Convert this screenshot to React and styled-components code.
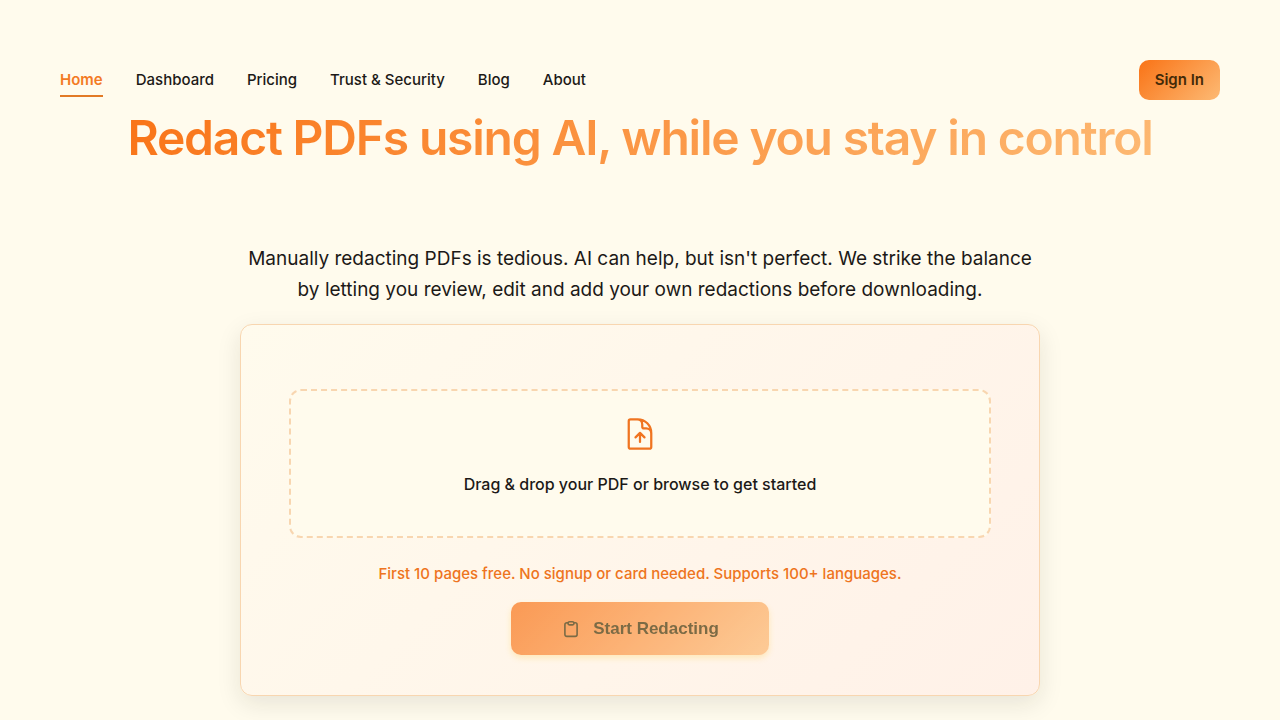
import React from "react";
import styled, { createGlobalStyle } from "styled-components";

const GlobalStyle = createGlobalStyle`
    * {
        box-sizing: border-box;
    }
    body {
        margin: 0;
        background-color: #fffbed;
        color: #1c1917;
        font-family: Inter, sans-serif;
    }
`
const Head = styled.header`
    display: flex;
    align-items: center;
    justify-content: space-between;
    padding: 60px 60px 0;
`
const HeadNav = styled.nav`
    display: flex;
    gap: 33px;
`
const NavLink = styled.a`
    padding: 5px 0 3px;
    border-bottom: 2px solid ${({ $active }) => ($active ? "#e27a26" : "transparent")};
    color: ${({ $active }) => ($active ? "#f37a24" : "#1c1917")};
    font-size: 15px;
    font-weight: ${({ $active }) => ($active ? 600 : 500)};
    line-height: 24px;
    text-decoration: none;
`
const SignIn = styled.button`
    height: 40px;
    padding: 0 16px;
    border: none;
    border-radius: 10px;
    background: linear-gradient(135deg, #f97316, #fdba74);
    color: #442a08;
    font-family: inherit;
    font-size: 15px;
    font-weight: 600;
    line-height: 24px;
    cursor: pointer;
`
const Main = styled.main`
    display: flex;
    flex-direction: column;
    align-items: center;
    padding-bottom: 24px;
`
const Title = styled.h1`
    margin: 0;
    padding: 8px 0;
    background: linear-gradient(135deg, #f97316, #fdba74);
    background-clip: text;
    color: transparent;
    font-size: 48px;
    font-weight: 600;
    line-height: 60px;
    letter-spacing: -0.025em;
    text-align: center;
`
const Intro = styled.p`
    max-width: 800px;
    margin: 67px 0 19px;
    font-size: 19px;
    line-height: 31px;
    text-align: center;
`
const Card = styled.section`
    display: flex;
    flex-direction: column;
    align-items: center;
    width: 100%;
    max-width: 800px;
    padding: 64px 48px 40px;
    border: 1px solid #f8d6b0;
    border-radius: 12px;
    background: linear-gradient(135deg, #fffbed, #fff1e8);
    box-shadow: 0 8px 24px rgba(28, 25, 23, 0.1);
`
const DropZone = styled.label`
    display: flex;
    flex-direction: column;
    align-items: center;
    gap: 20px;
    width: 100%;
    padding: 25px 24px 40px;
    border: 2px dashed #f8d6b0;
    border-radius: 12px;
    background-color: #fffbed;
    font-size: 16px;
    font-weight: 500;
    line-height: 24px;
    cursor: pointer;
`
const FileInput = styled.input`
    display: none;
`
const Note = styled.p`
    margin: 24px 0 16px;
    color: #ee7420;
    font-size: 15px;
    font-weight: 500;
    line-height: 24px;
`
const StartButton = styled.button`
    display: flex;
    align-items: center;
    justify-content: center;
    gap: 12px;
    min-width: 258px;
    height: 53px;
    padding: 0 32px;
    border: none;
    border-radius: 10px;
    background: linear-gradient(135deg, #f97316, #fdba74);
    box-shadow: 0 3px 6px rgba(253, 200, 60, 0.4);
    color: #443100;
    font-family: "Liberation Sans", Arial, sans-serif;
    font-size: 17px;
    font-weight: 700;
    opacity: 0.7;
`

const links = ["Home", "Dashboard", "Pricing", "Trust & Security", "Blog", "About"];

function PageUpIcon() {
    return (
        <svg width="36" height="36" viewBox="0 0 24 24" fill="none" stroke="#f07420" strokeWidth="1.5" strokeLinecap="round" strokeLinejoin="round" aria-hidden="true">
            <path d="M19.5 14.25v-2.625a3.375 3.375 0 0 0-3.375-3.375h-1.5A1.125 1.125 0 0 1 13.5 7.125v-1.5a3.375 3.375 0 0 0-3.375-3.375H8.25m6.75 12-3-3m0 0-3 3m3-3v6m-1.5-15H5.625c-.621 0-1.125.504-1.125 1.125v17.25c0 .621.504 1.125 1.125 1.125h12.75c.621 0 1.125-.504 1.125-1.125V11.25a9 9 0 0 0-9-9Z" />
        </svg>
    )
}

function ClipboardIcon() {
    return (
        <svg width="20" height="20" viewBox="0 0 20 20" fill="none" stroke="currentColor" strokeWidth="1.6" strokeLinecap="round" strokeLinejoin="round" aria-hidden="true">
            <path d="M7 3.800H5.800A1.900 1.900 0 0 0 3.900 5.700v9.800a1.900 1.900 0 0 0 1.900 1.900h8.400a1.900 1.900 0 0 0 1.900-1.900V5.700a1.900 1.900 0 0 0-1.900-1.900H13" />
            <path d="M8.700 2.700h2.600A1.600 1.600 0 0 1 13 4.300 1.600 1.600 0 0 1 11.300 5.900H8.700A1.600 1.600 0 0 1 7 4.300 1.600 1.600 0 0 1 8.700 2.700Z" />
        </svg>
    )
}

function App() {
    return (
        <>
            <GlobalStyle />
            <Head>
                <HeadNav>
                    {links.map((name) => (
                        <NavLink key={name} href="#" $active={name === "Home"}>{name}</NavLink>
                    ))}
                </HeadNav>
                <SignIn>Sign In</SignIn>
            </Head>
            <Main>
                <Title>Redact PDFs using AI, while you stay in control</Title>
                <Intro>
                    Manually redacting PDFs is tedious. AI can help, but isn't perfect. We strike the balance
                    by letting you review, edit and add your own redactions before downloading.
                </Intro>
                <Card>
                    <DropZone>
                        <PageUpIcon />
                        Drag &amp; drop your PDF or browse to get started
                        <FileInput type="file" accept="application/pdf" />
                    </DropZone>
                    <Note>First 10 pages free. No signup or card needed. Supports 100+ languages.</Note>
                    <StartButton disabled>
                        <ClipboardIcon />
                        Start Redacting
                    </StartButton>
                </Card>
            </Main>
        </>
    )
}

export default App;
